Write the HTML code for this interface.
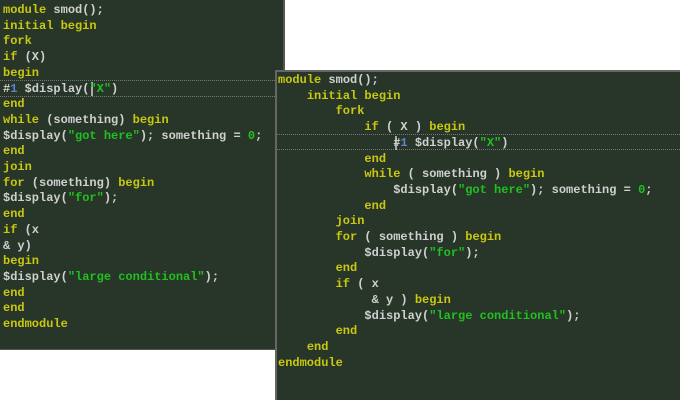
<html><head><style>
body{margin:0;width:680px;height:400px;background:#fff;position:relative;overflow:hidden;font-family:"Liberation Mono",monospace;font-size:12px;}
.p{position:absolute;background:#283629;}
.l{position:absolute;white-space:pre;line-height:15.7px;color:#d0d0d0;font-weight:bold}
.k{color:#c8c810}.s{color:#20c020}.n{color:#6080d0}.g{color:#c8c8c8}
.d{position:absolute;height:0;border-top:1px dotted #777;}
.c{position:absolute;width:2px;height:14px;background:#aaa}
</style></head><body>
<div class="p" style="left:0;top:0;width:283px;height:349px;border-right:2px solid #555;border-bottom:1px solid #555"></div>
<div class="d" style="left:0;top:80px;width:275px"></div>
<div class="d" style="left:0;top:96px;width:275px"></div>
<div class="c" style="left:91px;top:82px"></div>
<div class="l" style="left:3px;top:3px"><span class="k">module</span> smod();
<span class="k">initial begin</span>
<span class="k">fork</span>
<span class="k">if</span> (X)
<span class="k">begin</span>
#<span class="n">1</span> $display(<span class="s">"X"</span>)
<span class="k">end</span>
<span class="k">while</span> (something) <span class="k">begin</span>
$display(<span class="s">"got here"</span>); something = <span class="s">0</span>;
<span class="k">end</span>
<span class="k">join</span>
<span class="k">for</span> (something) <span class="k">begin</span>
$display(<span class="s">"for"</span>);
<span class="k">end</span>
<span class="k">if</span> (x
& y)
<span class="k">begin</span>
$display(<span class="s">"large conditional"</span>);
<span class="k">end</span>
<span class="k">end</span>
<span class="k">endmodule</span></div>
<div class="p" style="left:275px;top:70px;width:405px;height:330px;border-left:2px solid #666;border-top:2px solid #666;box-sizing:border-box"></div>
<div class="d" style="left:277px;top:134px;width:403px"></div>
<div class="d" style="left:277px;top:149px;width:403px"></div>
<div class="c" style="left:395px;top:136px"></div>
<div class="l" style="left:278px;top:73px"><span class="k">module</span> smod();
    <span class="k">initial begin</span>
        <span class="k">fork</span>
            <span class="k">if</span> ( X ) <span class="k">begin</span>
                #<span class="n">1</span> $display(<span class="s">"X"</span>)
            <span class="k">end</span>
            <span class="k">while</span> ( something ) <span class="k">begin</span>
                $display(<span class="s">"got here"</span>); something = <span class="s">0</span>;
            <span class="k">end</span>
        <span class="k">join</span>
        <span class="k">for</span> ( something ) <span class="k">begin</span>
            $display(<span class="s">"for"</span>);
        <span class="k">end</span>
        <span class="k">if</span> ( x
             & y ) <span class="k">begin</span>
            $display(<span class="s">"large conditional"</span>);
        <span class="k">end</span>
    <span class="k">end</span>
<span class="k">endmodule</span></div>
</body></html>
